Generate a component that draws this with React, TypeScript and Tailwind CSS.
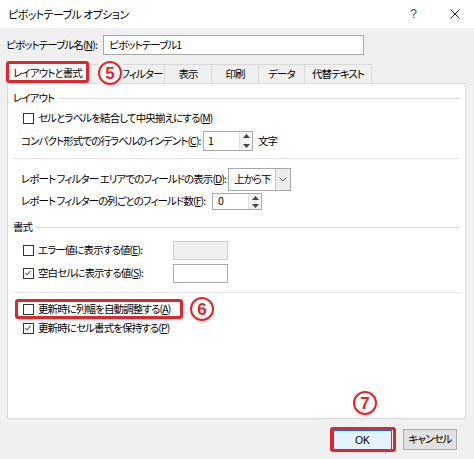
import React from "react";

function Checkbox({ checked }: { checked?: boolean }) {
  return (
    <span className="relative inline-flex w-[11px] h-[11px] border border-[#333333] bg-white shrink-0">
      {checked && (
        <svg viewBox="0 0 11 11" className="absolute inset-0 w-[9px] h-[9px]">
          <path d="M1.5 4.8 L3.8 7.2 L8 2.2" fill="none" stroke="#222" strokeWidth="1.2" />
        </svg>
      )}
    </span>
  );
}

function Spinner() {
  return (
    <span className="flex flex-col w-[13px] h-full border-l border-[#e0e0e0] bg-white">
      <span className="flex-1 flex items-center justify-center bg-[#f2f2f2] border-b border-white">
        <svg viewBox="0 0 7 4" className="w-[7px] h-[4px]"><path d="M0 4 L3.5 0 L7 4Z" fill="#444" /></svg>
      </span>
      <span className="flex-1 flex items-center justify-center bg-[#f2f2f2]">
        <svg viewBox="0 0 7 4" className="w-[7px] h-[4px]"><path d="M0 0 L3.5 4 L7 0Z" fill="#444" /></svg>
      </span>
    </span>
  );
}

function Circled({ n }: { n: string }) {
  return (
    <span className="flex items-center justify-center w-[24px] h-[24px] rounded-full bg-white border-2 border-[#e3242b] text-[#e3242b] text-[17px] font-bold leading-none tracking-normal shadow-[0_0_3px_2px_rgba(255,255,255,0.9),0_1px_3px_rgba(0,0,0,0.25)] [font-family:'Liberation_Sans',Arial,sans-serif]">
      {n}
    </span>
  );
}

function Tab({ label, w, selected, extra }: { label: string; w: string; selected?: boolean; extra?: string }) {
  return (
    <div
      className={
        selected
          ? `${w} h-[21px] -mb-px flex items-center justify-center bg-white border border-[#d9d9d9] border-b-white z-10`
          : `${w} h-[19px] flex items-center bg-[#f0f0f0] border border-[#d9d9d9] border-l-0 border-b-0 ${extra ?? "justify-center"}`
      }
    >
      {label}
    </div>
  );
}

export default function App() {
  return (
    <div className="relative w-[474px] h-[459px] bg-[#f0f0f0] overflow-hidden whitespace-nowrap text-[10.5px] tracking-[-0.9px] text-black leading-none [font-family:'Noto_Sans_CJK_JP','Noto_Sans',sans-serif] [font-feature-settings:'palt']">
      {/* title bar */}
      <div className="h-[28px] bg-white flex items-center pl-[8px] pr-[14px]">
        <span className="text-[11px] tracking-[-0.6px]">ピボットテーブル オプション</span>
        <span className="ml-auto mr-[33px] text-[12px] text-[#444] tracking-normal [font-family:'Liberation_Sans',sans-serif]">?</span>
        <svg viewBox="0 0 10 10" className="w-[10px] h-[10px]">
          <path d="M0.5 0.5 L9.5 9.5 M9.5 0.5 L0.5 9.5" stroke="#222" strokeWidth="1" />
        </svg>
      </div>

      {/* name row */}
      <div className="flex items-center mt-[7px] pl-[6px] h-[20px]">
        <span className="w-[97px]">
          ピボットテーブル名(<span className="underline">N</span>):
        </span>
        <div className="w-[261px] h-[20px] bg-white border border-[#a8a8a8] flex items-center pl-[5px]">ピボットテーブル1</div>
      </div>

      {/* tabs */}
      <div className="flex items-end pl-[7px] mt-[6px] h-[22px] relative">
        <Tab label="レイアウトと書式" w="w-[81px]" selected />
        <Tab label="フィルター" w="w-[77px]" extra="justify-start pl-[33px]" />
        <Tab label="表示" w="w-[47px]" />
        <Tab label="印刷" w="w-[47px]" />
        <Tab label="データ" w="w-[46px]" />
        <Tab label="代替テキスト" w="w-[67px]" />
      </div>

      {/* panel */}
      <div className="ml-[7px] w-[459px] h-[336px] bg-white border border-[#d9d9d9] flex flex-col pl-[5px] pr-[5px]">
        <div className="mt-[6px] h-[16px] flex items-center gap-[4px]">
          <span>レイアウト</span>
          <span className="flex-1 h-px bg-[#dcdcdc]" />
        </div>
        <div className="mt-[4px] h-[16px] flex items-center gap-[4px] pl-[10px]">
          <Checkbox />
          <span>セルとラベルを結合して中央揃えにする(<span className="underline">M</span>)</span>
        </div>
        <div className="mt-[5px] h-[20px] flex items-center pl-[8px]">
          <span className="w-[182px]">コンパクト形式での行ラベルのインデント(<span className="underline">C</span>):</span>
          <div className="w-[50px] h-[20px] border border-[#a8a8a8] bg-white flex items-center">
            <span className="flex-1 pl-[4px]">1</span>
            <Spinner />
          </div>
          <span className="ml-[5px]">文字</span>
        </div>
        <div className="mt-[7px] h-px bg-[#e3e3e3]" />
        <div className="mt-[9px] h-[23px] flex items-center pl-[8px]">
          <span className="w-[207px]">レポート フィルター エリアでのフィールドの表示(<span className="underline">D</span>):</span>
          <div className="w-[63px] h-[23px] border border-[#a8a8a8] bg-white flex items-center">
            <span className="flex-1 pl-[5px]">上から下</span>
            <span className="w-[15px] h-full bg-[#ececec] border-l border-[#c8c8c8] flex items-center justify-center">
              <svg viewBox="0 0 8 5" className="w-[8px] h-[5px]"><path d="M0.5 0.5 L4 4 L7.5 0.5" fill="none" stroke="#555" strokeWidth="1" /></svg>
            </span>
          </div>
        </div>
        <div className="mt-[2px] h-[17px] flex items-center pl-[8px]">
          <span className="w-[191px]">レポート フィルターの列ごとのフィールド数(<span className="underline">F</span>):</span>
          <div className="w-[50px] h-[17px] border border-[#a8a8a8] bg-white flex items-center">
            <span className="flex-1 pl-[5px]">0</span>
            <Spinner />
          </div>
        </div>

        <div className="mt-[9px] h-[16px] flex items-center gap-[4px]">
          <span>書式</span>
          <span className="flex-1 h-px bg-[#dcdcdc]" />
        </div>
        <div className="mt-[6px] h-[19px] flex items-center pl-[10px]">
          <Checkbox />
          <span className="ml-[4px] w-[135px]">エラー値に表示する値(<span className="underline">E</span>):</span>
          <div className="w-[55px] h-[19px] border border-[#cfcfcf] bg-[#f0f0f0]" />
        </div>
        <div className="mt-[4px] h-[19px] flex items-center pl-[10px]">
          <Checkbox checked />
          <span className="ml-[4px] w-[135px]">空白セルに表示する値(<span className="underline">S</span>):</span>
          <div className="w-[55px] h-[19px] border border-[#a8a8a8] bg-white" />
        </div>
        <div className="mt-[9px] h-px bg-[#e3e3e3]" />
        <div className="mt-[8px] h-[16px] flex items-center gap-[4px] pl-[10px]">
          <Checkbox />
          <span>更新時に列幅を自動調整する(<span className="underline">A</span>)</span>
        </div>
        <div className="mt-[3px] h-[16px] flex items-center gap-[4px] pl-[10px]">
          <Checkbox checked />
          <span>更新時にセル書式を保持する(<span className="underline">P</span>)</span>
        </div>
      </div>

      {/* buttons */}
      <div className="mt-[10px] flex justify-end pr-[17px] gap-[11px]">
        <div className="w-[59px] h-[20px] mt-px bg-[#e5f1fb] border border-[#0078d7] flex items-center justify-center [font-family:'Liberation_Sans',sans-serif] tracking-normal">OK</div>
        <div className="w-[54px] h-[21px] bg-[#e1e1e1] border border-[#adadad] flex items-center justify-center">キャンセル</div>
      </div>

      {/* annotations */}
      <div className="absolute left-[6px] top-[61px] w-[83px] h-[22px] border-[3px] border-[#e3242b] rounded-[3px] z-20" />
      <div className="absolute left-[98px] top-[61px] z-20"><Circled n="5" /></div>
      <div className="absolute left-[15px] top-[299px] w-[168px] h-[20px] border-[3px] border-[#e3242b] rounded-[3px] z-20" />
      <div className="absolute left-[190px] top-[297px] z-20"><Circled n="6" /></div>
      <div className="absolute left-[330px] top-[427px] w-[66px] h-[25px] border-[3px] border-[#e3242b] rounded-[3px] z-20" />
      <div className="absolute left-[353px] top-[391px] z-20"><Circled n="7" /></div>
    </div>
  );
}
